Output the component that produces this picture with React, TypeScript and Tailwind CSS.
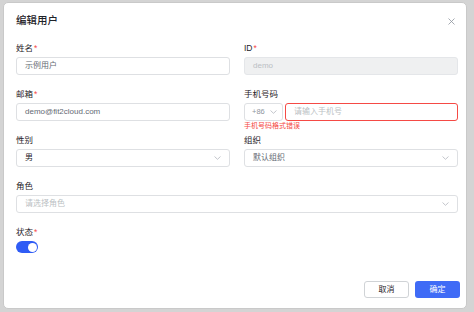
const Req = () => <span className="text-[#f54a45] ml-[1px]">*</span>;

const Label = ({ text, req }: { text: string; req?: boolean }) => (
  <div className="h-[12px] leading-[12px] text-[8.5px] text-[#1f2329] mb-[3px]">
    {text}
    {req && <Req />}
  </div>
);

const Chevron = () => (
  <svg width="7" height="4" viewBox="0 0 7 4" fill="none">
    <path d="M0.5 0.5 L3.5 3.3 L6.5 0.5" stroke="#b4b8bf" strokeWidth="0.8" />
  </svg>
);

const Box = ({
  children,
  className = '',
}: {
  children?: React.ReactNode;
  className?: string;
}) => (
  <div
    className={`h-[18px] rounded-[3px] border flex items-center px-[8px] text-[8px] ${className}`}
  >
    {children}
  </div>
);

export default function App() {
  return (
    <div
      className="w-[474px] h-[312px] bg-[#d4d4d4] pt-[2px] pl-[3px] pr-[7px] pb-[3px]"
      style={{ fontFamily: '"Liberation Sans", "Noto Sans CJK SC", sans-serif' }}
    >
      <div className="h-full bg-white rounded-[5px] border border-[#c9c9c9] pl-[12px] pr-[8px] flex flex-col">
        <div className="flex items-center justify-between h-[14px] mt-[11px] mb-[14px]">
          <div className="text-[10.5px] font-medium text-[#1f2329]">编辑用户</div>
          <svg width="7" height="7" viewBox="0 0 7 7" className="mr-[3px]">
            <path d="M0.5 0.5 L6.5 6.5 M6.5 0.5 L0.5 6.5" stroke="#8f959e" strokeWidth="0.8" />
          </svg>
        </div>

        <div className="grid grid-cols-2 gap-x-[14px] gap-y-[13px]">
          <div>
            <Label text="姓名" req />
            <Box className="border-[#dee0e3] text-[#646a73]">示例用户</Box>
          </div>
          <div>
            <Label text="ID" req />
            <Box className="border-[#e4e6e9] bg-[#eff0f1] text-[#bbbfc4]">demo</Box>
          </div>

          <div>
            <Label text="邮箱" req />
            <Box className="border-[#dee0e3] text-[#646a73]">demo@fit2cloud.com</Box>
          </div>
          <div className="relative">
            <Label text="手机号码" />
            <div className="flex gap-[2px]">
              <Box className="w-[39px] border-[#dee0e3] text-[#8f959e] justify-between pl-[7px] pr-[5px]">
                <span className="text-[7.5px]">+86</span>
                <Chevron />
              </Box>
              <Box className="flex-1 border-[#f54a45] text-[#bbbfc4]">请输入手机号</Box>
            </div>
            <div className="absolute left-0 top-[33px] text-[7px] leading-[9px] text-[#f54a45]">
              手机号码格式错误
            </div>
          </div>

          <div>
            <Label text="性别" />
            <Box className="border-[#dee0e3] text-[#1f2329] justify-between">
              <span>男</span>
              <Chevron />
            </Box>
          </div>
          <div>
            <Label text="组织" />
            <Box className="border-[#dee0e3] text-[#646a73] justify-between">
              <span>默认组织</span>
              <Chevron />
            </Box>
          </div>

          <div className="col-span-2">
            <Label text="角色" />
            <Box className="border-[#dee0e3] text-[#bbbfc4] justify-between">
              <span>请选择角色</span>
              <Chevron />
            </Box>
          </div>

          <div className="col-span-2">
            <Label text="状态" req />
            <div className="mt-[3px] w-[22px] h-[12px] rounded-full bg-[#2f5cf5] flex items-center justify-end pr-[1.5px]">
              <div className="w-[9px] h-[9px] rounded-full bg-white" />
            </div>
          </div>
        </div>

        <div className="mt-auto mb-[10px] flex justify-end gap-[6px] -mr-[2px]">
          <button className="w-[45px] h-[17px] rounded-[3px] border border-[#d0d3d6] bg-white text-[8px] text-[#1f2329]">
            取消
          </button>
          <button className="w-[45px] h-[17px] rounded-[3px] bg-[#3f6bf6] text-[8px] text-white">
            确定
          </button>
        </div>
      </div>
    </div>
  );
}
